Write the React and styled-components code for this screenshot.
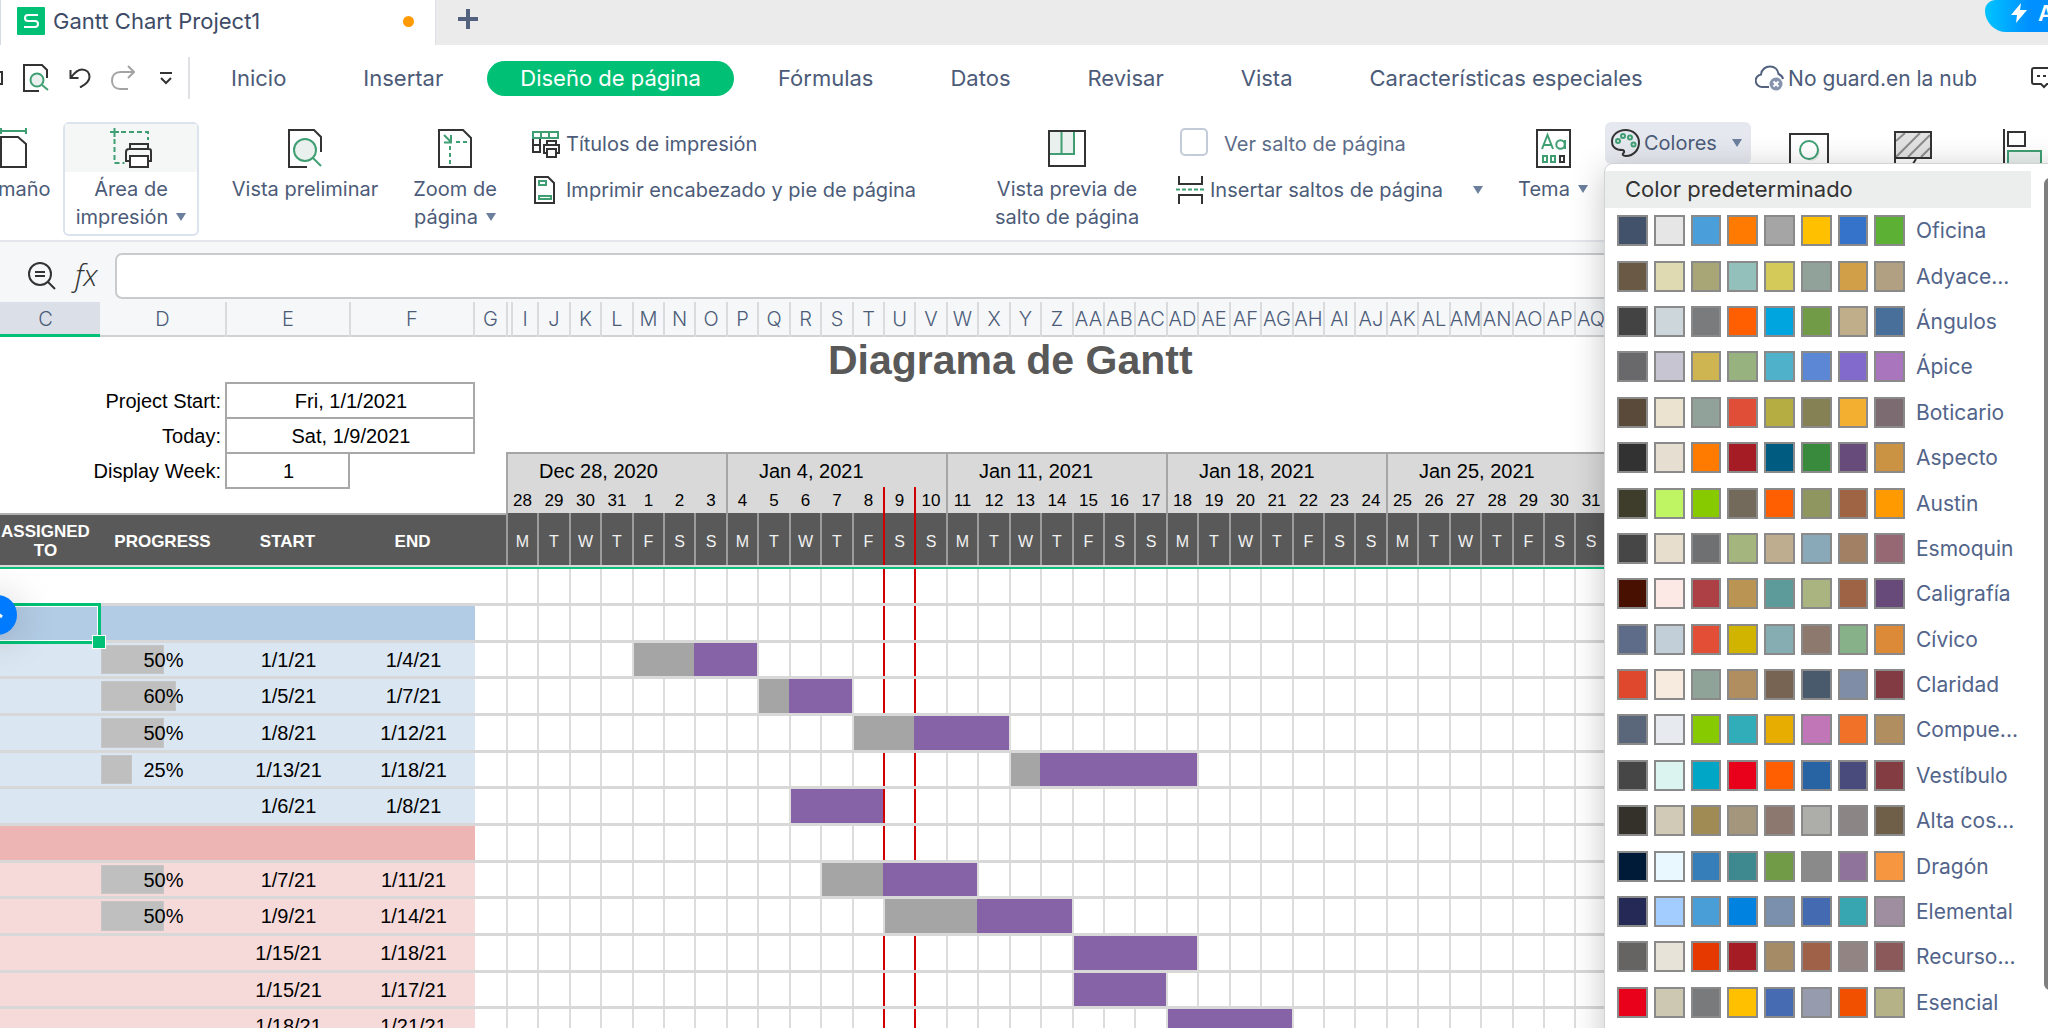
import { Fragment } from 'react'
import styled, { createGlobalStyle, css } from 'styled-components'

const GlobalStyle = createGlobalStyle`
   * {
      box-sizing: border-box;
   }
   body {
      margin: 0;
      overflow: hidden;
      background: #fff;
      font-family: Inter, "Open Sans", sans-serif;
      color: #4c5b78;
   }
   button {
      border: 0;
      padding: 0;
      background: none;
      color: inherit;
      font: inherit;
   }
   svg {
      flex: none;
   }
`

const INK = '#333'
const GREEN = '#3f9f73'
const LINE = '#d8d8d8'

const Page = styled.div`
   height: 100vh;
   overflow: hidden;
   display: flex;
   flex-direction: column;
`

/* ---------- title bar ---------- */

const TitleBar = styled.header`
   display: flex;
   flex: none;
   height: 45px;
   background: #ebebeb;
`

const FileTab = styled.div`
   display: flex;
   align-items: center;
   width: 436px;
   padding: 0 21px 3px 16px;
   border-left: 1px solid #d5dbe5;
   border-right: 1px solid #dcdfe5;
   background: #fff;
   color: #3d4b66;
   font-size: 22px;
`

const FileName = styled.span`
   margin-left: 8px;
   flex: 1;
`

const UnsavedDot = styled.span`
   width: 11px;
   height: 11px;
   border-radius: 50%;
   background: #ff9a00;
`

const NewTab = styled.button`
   display: flex;
   align-items: center;
   justify-content: center;
   width: 64px;
   height: 38px;
`

const UpgradeButton = styled.button`
   display: flex;
   align-items: center;
   gap: 10px;
   width: 63px;
   height: 32px;
   margin-left: auto;
   padding: 0 0 6px 25px;
   border-radius: 12px 0 0 24px;
   background: linear-gradient(90deg, #00c4ff, #0090ff 70%);
   color: #fff;
   font-size: 22px;
   font-weight: 600;
   white-space: nowrap;
   overflow: hidden;
`

/* ---------- menu bar ---------- */

const MenuBar = styled.div`
   display: flex;
   flex: none;
   align-items: center;
   height: 66px;
   overflow: hidden;
`

const QuickTools = styled.div`
   display: flex;
   align-items: center;
   gap: 20px;
   width: 213px;
   height: 42px;
   margin-left: -23px;
   flex: none;
   border-right: 2px solid #dfe1e4;

   button {
      display: flex;
      justify-content: center;
      min-width: 22px;
   }
`

const Tabs = styled.nav`
   display: flex;
   gap: 11px;
   margin-left: 8px;
   flex: none;
`

const Tab = styled.button`
   height: 35px;
   padding: 0 33px;
   border-radius: 18px;
   font-size: 22px;
   line-height: 34px;
   white-space: nowrap;
   ${({ $active }) => $active && css`
      background: #00c076;
      color: #fff;
   `}
`

const CloudStatus = styled.button`
   display: flex;
   align-items: center;
   gap: 3px;
   margin-left: auto;
   margin-right: 54px;
   font-size: 21px;
   white-space: nowrap;
`

const Comments = styled.button`
   display: flex;
   margin-right: -11px;
`

/* ---------- ribbon ---------- */

const Ribbon = styled.div`
   position: relative;
   z-index: 5;
   display: flex;
   flex: none;
   align-items: flex-start;
   gap: 12px;
   height: 131px;
   padding-top: 11px;
   margin-left: -25px;
   border-bottom: 2px solid #e3e7ed;
`

const Tool = styled.button`
   flex: none;
   width: ${({ $w }) => $w}px;
   height: 114px;
   display: flex;
   flex-direction: column;
   align-items: center;
   font-size: 20px;
   line-height: 28px;
   white-space: nowrap;
   ${({ $boxed }) => $boxed && css`
      border-radius: 6px;
      box-shadow: inset 0 0 0 2px #dbe3ee;
   `}
`

const ToolIcon = styled.span`
   display: flex;
   align-items: center;
   justify-content: center;
   align-self: stretch;
   height: 48px;
   margin: 2px 2px 3px;
   background: ${({ $shade }) => ($shade ? '#f5f6f6' : 'none')};
`

const Caret = styled.i`
   display: inline-block;
   flex: none;
   margin-left: 8px;
   vertical-align: 3px;
   border: 5px solid transparent;
   border-top: 8px solid #6b7f9c;
   border-bottom: 0;
`

const Stack = styled.div`
   flex: none;
   width: ${({ $w }) => $w}px;
   padding-left: ${({ $pad }) => $pad}px;
   display: flex;
   flex-direction: column;
   gap: 2px;
`

const StackItem = styled.button`
   display: flex;
   align-items: center;
   height: 44px;
   font-size: 20px;
   white-space: nowrap;

   svg {
      width: 28px;
      margin-right: 6px;
   }
   ${Caret} {
      margin-left: 30px;
   }
`

const CheckRow = styled.label`
   display: flex;
   align-items: center;
   height: 44px;
   padding-left: 4px;
   gap: 16px;
   color: #5c6c88;
   font-size: 20px;
   white-space: nowrap;
`

const Check = styled.input`
   appearance: none;
   width: 28px;
   height: 28px;
   margin: 0 0 4px;
   border: 2px solid #c3cbd9;
   border-radius: 5px;
   background: #fff;
`

const ColorsWrap = styled.div`
   position: relative;
   flex: none;
   width: 146px;
`

const ColorsButton = styled.button`
   display: flex;
   align-items: center;
   width: 100%;
   height: 42px;
   padding: 0 9px 0 6px;
   gap: 4px;
   border-radius: 6px;
   background: #e5e9ef;
   font-size: 20px;

   ${Caret} {
      margin-left: auto;
   }
`

/* ---------- colour menu ---------- */

const ColorMenu = styled.div`
   position: absolute;
   z-index: 10;
   top: 42px;
   left: 0;
   width: 460px;
   height: 900px;
   padding-top: 7px;
   border-radius: 8px 0 0 0;
   background: #fff;
   box-shadow: 0 0 0 1px #d0d2d4, 0 6px 34px rgba(0, 0, 0, 0.24);
`

const MenuTitle = styled.div`
   width: 426px;
   height: 37px;
   padding-left: 20px;
   background: #eceeed;
   color: #333;
   font-size: 22px;
   line-height: 36px;
`

const ThemeList = styled.div`
   display: grid;
   grid-template-rows: repeat(18, 1fr);
   height: 817px;
`

const ThemeRow = styled.button`
   display: flex;
   align-items: center;
   gap: 11px;
   padding-left: 12px;
   color: #52648a;
   font-size: 21px;
   text-align: left;
   white-space: nowrap;
`

const Swatches = styled.span`
   display: grid;
   grid-template-columns: repeat(8, 1fr);
   gap: 6px;
   width: 288px;
`

const Swatch = styled.span`
   height: 31px;
   border: 2px solid #8a8a8a;
   background: ${({ $color }) => $color};
`

const ScrollThumb = styled.div`
   position: absolute;
   top: 14px;
   left: 439px;
   width: 12px;
   height: 812px;
   border-radius: 6px;
   background: #7f7f7f;
`

/* ---------- formula bar and column letters ---------- */

const FormulaBar = styled.div`
   display: flex;
   flex: none;
   align-items: center;
   height: 60px;
   padding: 8px 0 1px 28px;
   background: #f5f7f9;
`

const Fx = styled.span`
   width: 40px;
   margin: 0 0 2px 19px;
   color: #333;
   font: italic 300 30px "Open Sans", sans-serif;
   line-height: 40px;
`

const FormulaInput = styled.input`
   flex: 1;
   height: 46px;
   border: 2px solid #c9cbcc;
   border-radius: 7px;
   background: #fff;
   font-size: 20px;
`

const Letters = styled.div`
   display: flex;
   flex: none;
   height: 35px;
   margin-left: -9px;
   border-bottom: 2px solid #cfd1d3;
   background: #f5f7f9;
   font-size: 20px;
   font-weight: 300;
   line-height: 35px;
`

const Letter = styled.span`
   flex: none;
   width: ${({ $w }) => $w}px;
   height: 35px;
   display: flex;
   justify-content: center;
   border-right: 2px solid #d9dbdd;
   ${({ $selected }) => $selected && css`
      background: #dbe0e8;
      border-bottom: 3px solid #00c076;
      border-right: 0;
   `}
`

/* ---------- sheet ---------- */

const SheetArea = styled.main`
   position: relative;
   flex: 1;
   overflow: hidden;
   background: #fff;
`

const Sheet = styled.table`
   width: 1615px;
   margin-left: -9px;
   border-collapse: separate;
   border-spacing: 0;
   table-layout: fixed;
   color: #000;
   font-family: "Liberation Sans", Arial, sans-serif;
   font-size: 20px;
   line-height: 24px;

   td, th {
      padding: 0;
      font-weight: 400;
      text-align: center;
   }
`

const TopRow = styled.tr`
   height: ${({ $h }) => $h}px;
`

const SheetTitle = styled.td`
   && {
      padding: 1px 0 0 322px;
      text-align: left;
      color: #595959;
      font-size: 41px;
      font-weight: 700;
      line-height: 44px;
   }
`

const InfoLabel = styled.th`
   && {
      padding: 2px 4px 0 0;
      text-align: right;
   }
`

const InfoValue = styled.td`
   && {
      padding: 1px 0 0 2px;
      border: 2px solid #a8a8a8;
      border-bottom: 0;
   }
`

const InfoEdge = styled.td`
   border-top: 2px solid #a8a8a8;
`

const Week = styled.th`
   && {
      padding-left: 31px;
      text-align: left;
      border-top: 2px solid #a6a6a6;
      border-left: 2px solid #a6a6a6;
      background: #d9d9d9;
   }
`

const DayNumber = styled.td`
   && {
      padding-top: 2px;
      font-size: 17px;
      line-height: 20px;
      background: #d9d9d9;
      border-left: 2px solid ${({ $monday, $red }) => ($red ? '#d10000' : $monday ? '#a6a6a6' : '#d9d9d9')};
   }
`

const Heading = styled.th`
   && {
      height: 56px;
      border-top: 2px solid #b0b0b0;
      border-bottom: 2px solid #0fbf7c;
      box-shadow: inset 0 -2px 0 #d9d9d9;
      background: #595959;
      color: #fff;
      font-size: 17px;
      font-weight: 700;
      line-height: 19px;
   }
`

const DayLetter = styled.th`
   && {
      padding: 3px 0 0 2px;
      border-bottom: 2px solid #0fbf7c;
      box-shadow: inset 0 -2px 0 #d9d9d9;
      background: linear-gradient(90deg, ${({ $red }) => ($red ? '#d10000' : '#9c9c9c')} 2px, #595959 2px);
      color: #f2f2f2;
      font-size: 16px;
   }
`

const TaskRow = styled.tr`
   height: 37px;
   &:nth-child(3n) {
      height: 36px;
   }
`

const Cell = styled.td`
   && {
      position: relative;
      padding-left: 2px;
      border-bottom: 3px solid ${LINE};
      background: ${({ $bg }) => $bg || '#fff'};
   }
`

const DayCell = styled.td`
   border-bottom: 3px solid ${LINE};
   background: linear-gradient(90deg, ${({ $edge }) => $edge || '#dcdcdc'} 2px, ${({ $fill }) => $fill || '#fff'} 2px);
   background-clip: padding-box;
`

const Progress = styled.div`
   position: absolute;
   top: 2px;
   bottom: 2px;
   left: 1px;
   border: 1px solid #c6c6c6;
   background: #bfbfbf;
`

const Amount = styled.span`
   position: relative;
`

const Selection = styled.div`
   position: absolute;
   z-index: 1;
   top: -3px;
   right: -1px;
   bottom: -4px;
   left: 0;
   border: 3px solid #00c076;
   box-shadow: inset 0 0 0 1px #fff;

   &::after {
      content: "";
      position: absolute;
      right: -8px;
      bottom: -8px;
      width: 12px;
      height: 12px;
      border: 1px solid #fff;
      background: #00c076;
   }
`

const Floater = styled.button`
   position: absolute;
   z-index: 2;
   top: 258px;
   left: -23px;
   display: flex;
   align-items: center;
   justify-content: flex-end;
   width: 40px;
   height: 40px;
   padding-right: 14px;
   border-radius: 50%;
   background: #007bff;
   box-shadow: 0 2px 40px rgba(0, 0, 0, 0.22);
`

/* ---------- data ---------- */

const menuTabs = ['Inicio', 'Insertar', 'Diseño de página', 'Fórmulas', 'Datos', 'Revisar', 'Vista', 'Características especiales']

const themes = [
   ['Oficina', '#43526b #e6e6e6 #4a9fdb #ff7a00 #a5a5a5 #ffc000 #3573cb #5cb034'],
   ['Adyace...', '#6a5a45 #e0dab3 #a8a576 #94c0bb #d4ca59 #90a29a #d19f48 #b2a083'],
   ['Ángulos', '#434343 #cdd6da #7a7b7d #ff5f00 #00a5e0 #729b47 #c0ae8a #486f99'],
   ['Ápice', '#69696b #c8c5d2 #ceb552 #97b17f #4fb2ca #5b87d5 #8269cc #a976be'],
   ['Boticario', '#5a4a3a #ebe3d0 #90a299 #e04e37 #b6ad42 #858155 #f3b030 #7c6b71'],
   ['Aspecto', '#323232 #e6dfd1 #ff7b00 #a61c24 #005b80 #3a8a3d #674b7a #c99343'],
   ['Austin', '#3e3d2c #bff562 #88ca00 #746a5c #ff5f00 #90965f #9e6444 #ff9b00'],
   ['Esmoquin', '#464646 #e8dece #6f7072 #a4b57e #bfad8f #89a9b8 #a28063 #956873'],
   ['Caligrafía', '#471000 #fce8e4 #ad4044 #ba9453 #5d9a9a #aab480 #9d6344 #674a7a'],
   ['Cívico', '#5f6c89 #c2cfd9 #e34f36 #d1b400 #86adb2 #8d796d #86b189 #dd8a38'],
   ['Claridad', '#e0482d #f7ebdf #90a398 #b18e60 #786453 #4a5a6d #7f8da6 #823b43'],
   ['Compue...', '#5a6679 #e7eaee #88ca00 #31adb9 #e7ad00 #c176b7 #f27128 #b08e5f'],
   ['Vestíbulo', '#464646 #dbf4f0 #00a6c5 #e9001b #ff5f00 #2863a3 #484b7c #843c43'],
   ['Alta cos...', '#33312a #d1cab6 #a08b54 #a4967d #8c786e #adaea9 #8b8586 #6f5f49'],
   ['Dragón', '#001b38 #e9f7ff #357eb9 #3e888f #729b47 #8a8a8a #90739b #f69641'],
   ['Elemental', '#252955 #a3ccff #4a9ed8 #0083e0 #7b90ad #446bb1 #37a6b1 #9f8da0'],
   ['Recurso...', '#666462 #e8e3d8 #e53900 #a61c24 #a68c66 #9f6148 #928483 #8c595b'],
   ['Esencial', '#e9001b #cdc8b1 #797a7b #ffc000 #476bb3 #969bae #f15000 #b6b287'],
]

const DAY_WIDTHS = [31, 32, 31, 32, 31, 31, 32]
const weeks = ['Dec 28, 2020', 'Jan 4, 2021', 'Jan 11, 2021', 'Jan 18, 2021', 'Jan 25, 2021']
const dayLetters = ['M', 'T', 'W', 'T', 'F', 'S', 'S']
const days = Array.from({ length: 35 }, (_, i) => ({
   number: i < 4 ? 28 + i : i - 3,
   letter: dayLetters[i % 7],
   width: DAY_WIDTHS[i % 7],
   monday: i % 7 === 0,
   red: i === 12 || i === 13, // both sides of today
}))

const BLUE_HEAD = '#b3cce5'
const BLUE = '#dae6f1'
const RED_HEAD = '#eeb5b5'
const RED = '#f6dada'

// bar: [first day, days done, end day (exclusive)]
const tasks = [
   {},
   { bg: BLUE_HEAD, selected: true },
   { bg: BLUE, progress: 50, start: '1/1/21', end: '1/4/21', bar: [4, 2, 8] },
   { bg: BLUE, progress: 60, start: '1/5/21', end: '1/7/21', bar: [8, 1, 11] },
   { bg: BLUE, progress: 50, start: '1/8/21', end: '1/12/21', bar: [11, 2, 16] },
   { bg: BLUE, progress: 25, start: '1/13/21', end: '1/18/21', bar: [16, 1, 22] },
   { bg: BLUE, start: '1/6/21', end: '1/8/21', bar: [9, 0, 12] },
   { bg: RED_HEAD },
   { bg: RED, progress: 50, start: '1/7/21', end: '1/11/21', bar: [10, 2, 15] },
   { bg: RED, progress: 50, start: '1/9/21', end: '1/14/21', bar: [12, 3, 18] },
   { bg: RED, start: '1/15/21', end: '1/18/21', bar: [18, 0, 22] },
   { bg: RED, start: '1/15/21', end: '1/17/21', bar: [18, 0, 21] },
   { bg: RED, start: '1/18/21', end: '1/21/21', bar: [21, 0, 25] },
]

const columnName = (n) => (n < 26 ? String.fromCharCode(65 + n) : 'A' + String.fromCharCode(39 + n))

/* ---------- icons ---------- */

const Icon = ({ w, h = w, sw = 2, stroke = INK, children }) => (
   <svg width={w} height={h} viewBox={`0 0 ${w} ${h}`} fill="none" stroke={stroke} strokeWidth={sw} aria-hidden="true">
      {children}
   </svg>
)

const LogoIcon = () => (
   <Icon w={28} stroke="#fff">
      <rect width="28" height="28" rx="1" fill="#00c076" stroke="none" />
      <path d="M21 8H11a3 3 0 0 0-3 3 3 3 0 0 0 3 3h7a3 3 0 0 1 3 3 3 3 0 0 1-3 3H7" />
   </Icon>
)

const PreviewSmallIcon = () => (
   <Icon w={26} h={28}>
      <path d="M16 27H1V1h18l5 5v8" />
      <circle cx="14" cy="16" r="6.500" stroke={GREEN} fill="#e9f0ed" />
      <path d="M19 21l6 5" stroke={GREEN} />
   </Icon>
)

const UndoIcon = () => (
   <Icon w={22} h={20}>
      <path d="M1.500 2v8h8M2 9.500C6 4 9 1.500 13 1.500c5 0 7.500 3.500 7.500 7.500 0 4-3 7-9.500 10.500" />
   </Icon>
)

const RedoIcon = () => (
   <Icon w={24} h={26} stroke="#a3a3a3">
      <path d="M17 1l6 6-6 6M23 7H9.500C4 7 1 10.500 1 15.500S4 24 9 24h8" />
   </Icon>
)

const MoreIcon = () => (
   <Icon w={14} h={14}>
      <path d="M1 2h12M2 7l5 5 5-5" />
   </Icon>
)

const CloudIcon = () => (
   <Icon w={30} h={26} stroke="#51617e">
      <path d="M14 22H7.500A6.300 6.300 0 0 1 6 9.500C6.500 4.500 10.500 1.500 15 1.500c4.500 0 8 3 8.500 7.500 2.500 1 4 2.500 4.500 5" />
      <circle cx="21" cy="19" r="6.500" fill="#8593ad" stroke="none" />
      <path d="M18.500 16.500l5 5m0-5l-5 5" stroke="#fff" />
   </Icon>
)

const CommentIcon = () => (
   <Icon w={28} h={22}>
      <path d="M3 1h22a2 2 0 0 1 2 2v12a2 2 0 0 1-2 2h-9l-3 3-3-3H3a2 2 0 0 1-2-2V3a2 2 0 0 1 2-2z" />
      <path d="M6 9h3m3 0h3m3 0h3" />
   </Icon>
)

const SizeIcon = () => (
   <Icon w={27} h={40}>
      <path d="M1 3h25M1 0v6M26 0v6" stroke={GREEN} />
      <path d="M1 9h17l8 7v23H1z" />
   </Icon>
)

const PrintAreaIcon = () => (
   <Icon w={42} h={40}>
      <path d="M0 4h9M4.500 0v9" stroke={GREEN} />
      <path d="M11 4h27v8M4.500 11v24h10" stroke={GREEN} strokeDasharray="5 3" />
      <path d="M20 21v-5h18v5M20 33h-4V24a3 3 0 0 1 3-3h20a2 2 0 0 1 2 2v10h-3" />
      <path d="M20 28h18v11H20z" fill="#fff" />
   </Icon>
)

const PreviewIcon = () => (
   <Icon w={34} h={40}>
      <path d="M19 39H1V2h25l7 7v15" />
      <circle cx="17" cy="22" r="11" stroke={GREEN} fill="#e9f0ed" />
      <path d="M25 30l8 8" stroke={GREEN} />
   </Icon>
)

const ZoomPageIcon = () => (
   <Icon w={34} h={40}>
      <path d="M1 2h24l8 8v29H1z" />
      <path d="M6 7l7 7M13 7v7.500H6" stroke={GREEN} />
      <path d="M18 14h14M12 18v20" stroke={GREEN} strokeDasharray="4 3" />
   </Icon>
)

const TitlesIcon = () => (
   <Icon w={28} h={27}>
      <path d="M1 1h25v6H1zM9 1v6M17 1v6" stroke={GREEN} />
      <path d="M1 8v13h7V8M1 14h7M15 14v-4h9v4M15 22h-3v-8h15v8h-3" />
      <path d="M15 18h9v8h-9z" fill="#fff" />
   </Icon>
)

const HeaderFooterIcon = () => (
   <Icon w={28} h={28}>
      <path d="M3 1h13l6 6v20H3z" />
      <path d="M7 5h7v4H7zM7 20h12v3H7z" stroke={GREEN} />
   </Icon>
)

const BreakPreviewIcon = () => (
   <Icon w={38} h={38}>
      <path d="M1 3h25v22H1z" stroke="none" fill="#e9f0ed" />
      <path d="M2 25h24V3M13.500 3v22" stroke={GREEN} />
      <path d="M1 2h36v35H1z" />
   </Icon>
)

const InsertBreakIcon = () => (
   <Icon w={28} h={28}>
      <path d="M3 0v8h23V0M3 28v-9h23v9" />
      <path d="M0 13.500h28" stroke={GREEN} strokeDasharray="4 2" />
   </Icon>
)

const ThemeIcon = () => (
   <Icon w={35} h={40}>
      <path d="M1 2h33v37H1z" />
      <path d="M6 21l5.500-14L17 21M8 17h7" stroke={GREEN} />
      <path d="M29 12v9" stroke={GREEN} />
      <circle cx="24.500" cy="16.500" r="4.200" stroke={GREEN} />
      <path d="M7 28h4v6H7zM15 28h4v6h-4z" stroke={GREEN} />
      <path d="M24 28h4v6h-4z" />
   </Icon>
)

const PaletteIcon = () => (
   <Icon w={29} h={28}>
      <path d="M7 20.500C3.500 19.500 1 16.500 1 12.500 1 6 7 1 14.500 1S28 6 28 13.500C28 21 22.500 27 15 27c-3.500 0-4-1.500-2.500-3 1.500-1.500.500-3-1.500-3-1.500 0-2.500-.200-4-.500z" />
      <g stroke={GREEN}>
         <circle cx="7" cy="12" r="2" />
         <circle cx="12" cy="7" r="2" />
         <circle cx="19" cy="8.500" r="2" />
         <circle cx="22.500" cy="15.500" r="2" />
      </g>
   </Icon>
)

const BackgroundIcon = () => (
   <Icon w={40} h={42}>
      <path d="M1 7h38v34H1z" />
      <circle cx="22" cy="25" r="9" fill="#ececec" stroke="none" />
      <circle cx="20" cy="23" r="9" stroke={GREEN} fill="#fff" />
   </Icon>
)

const PatternIcon = () => (
   <Icon w={38} h={42}>
      <g transform="translate(0 4)">
         <path d="M1 1h36v26H1z" fill="#e2e2e2" />
         <path d="M2 10L11 2M2 26L26 2M14 26L36 4M27 26l9-9" stroke="#8c8c8c" />
         <path d="M1 1v37M22 28l-5 8" />
         <path d="M1 1h36v26H1z" />
      </g>
   </Icon>
)

const AlignIcon = () => (
   <Icon w={40} h={40}>
      <path d="M1 1v39M5 4h17v14H5z" />
      <path d="M5 23h33v16H5z" stroke={GREEN} fill="#e9f0ed" />
   </Icon>
)

const SearchCellIcon = () => (
   <Icon w={28} h={28}>
      <circle cx="12" cy="12" r="11" />
      <path d="M20 20l7 7M7 10h10M7 14h10" />
   </Icon>
)

/* ---------- parts ---------- */

const ColorPicker = () => (
   <ColorMenu>
      <MenuTitle>Color predeterminado</MenuTitle>
      <ThemeList>
         {themes.map(([name, colors]) => (
            <ThemeRow key={name}>
               <Swatches>
                  {colors.split(' ').map((c, i) => <Swatch key={i} $color={c} />)}
               </Swatches>
               {name}
            </ThemeRow>
         ))}
      </ThemeList>
      <ScrollThumb />
   </ColorMenu>
)

const ColumnLetters = () => (
   <Letters>
      <Letter $w={109} $selected>C</Letter>
      <Letter $w={127}>D</Letter>
      <Letter $w={124}>E</Letter>
      <Letter $w={124}>F</Letter>
      <Letter $w={33}>G</Letter>
      <Letter $w={5} />
      {days.map((d, i) => (
         <Letter key={i} $w={i === 0 ? d.width - 5 : d.width}>{columnName(i + 8)}</Letter>
      ))}
   </Letters>
)

const DayCells = ({ bar }) => days.map((d, i) => {
   const inBar = bar && i >= bar[0] && i < bar[2]
   const fill = inBar ? (i < bar[0] + bar[1] ? '#a5a5a5' : '#8662a6') : undefined
   let edge = d.red ? '#d10000' : undefined
   if (inBar) edge = i > bar[0] ? fill : undefined
   return <DayCell key={i} $fill={fill} $edge={edge} />
})

const GanttSheet = () => (
   <Sheet>
      <colgroup>
         <col style={{ width: 109 }} />
         <col style={{ width: 125 }} />
         <col style={{ width: 125 }} />
         <col style={{ width: 125 }} />
         <col style={{ width: 31 }} />
         {days.map((d, i) => <col key={i} style={{ width: d.width }} />)}
      </colgroup>
      <thead>
         <TopRow $h={45}>
            <td colSpan={5} />
            <SheetTitle colSpan={35}>Diagrama de Gantt</SheetTitle>
         </TopRow>
         <TopRow $h={35}>
            <InfoLabel colSpan={2}>Project Start:</InfoLabel>
            <InfoValue colSpan={2}>Fri, 1/1/2021</InfoValue>
         </TopRow>
         <TopRow $h={35}>
            <InfoLabel colSpan={2}>Today:</InfoLabel>
            <InfoValue colSpan={2}>Sat, 1/9/2021</InfoValue>
         </TopRow>
         <TopRow $h={35}>
            <InfoLabel colSpan={2}>Display Week:</InfoLabel>
            <InfoValue>1</InfoValue>
            <InfoEdge />
            <td />
            {weeks.map((w) => <Week key={w} colSpan={7}>{w}</Week>)}
         </TopRow>
         <TopRow $h={26}>
            <td colSpan={2} />
            <InfoEdge />
            <td colSpan={2} />
            {days.map((d, i) => <DayNumber key={i} $monday={d.monday} $red={d.red}>{d.number}</DayNumber>)}
         </TopRow>
         <tr>
            <Heading>ASSIGNED<br />TO</Heading>
            <Heading>PROGRESS</Heading>
            <Heading>START</Heading>
            <Heading>END</Heading>
            <Heading />
            {days.map((d, i) => <DayLetter key={i} $red={d.red}>{d.letter}</DayLetter>)}
         </tr>
      </thead>
      <tbody>
         {tasks.map((t, i) => (
            <TaskRow key={i}>
               <Cell $bg={t.bg}>{t.selected && <Selection />}</Cell>
               <Cell $bg={t.bg}>
                  {t.progress && (
                     <Fragment>
                        <Progress style={{ width: `${t.progress}%` }} />
                        <Amount>{t.progress}%</Amount>
                     </Fragment>
                  )}
               </Cell>
               <Cell $bg={t.bg}>{t.start}</Cell>
               <Cell $bg={t.bg}>{t.end}</Cell>
               <Cell />
               <DayCells bar={t.bar} />
            </TaskRow>
         ))}
      </tbody>
   </Sheet>
)

const App = () => (
   <Page>
      <GlobalStyle />
      <TitleBar>
         <FileTab>
            <LogoIcon />
            <FileName>Gantt Chart Project1</FileName>
            <UnsavedDot />
         </FileTab>
         <NewTab aria-label="+">
            <Icon w={22} sw={4} stroke="#51617e"><path d="M11 1v20M1 11h20" /></Icon>
         </NewTab>
         <UpgradeButton>
            <svg width="18" height="22" viewBox="0 0 18 22" fill="#fff" aria-hidden="true">
               <path d="M11 1L1 13h6l-1 8 11-13h-7z" />
            </svg>
            A
         </UpgradeButton>
      </TitleBar>

      <MenuBar>
         <QuickTools>
            <button aria-label="Imprimir">
               <Icon w={26} h={20}><path d="M2 15V4h23v12h-5" /></Icon>
            </button>
            <button aria-label="Vista preliminar"><PreviewSmallIcon /></button>
            <button aria-label="Deshacer"><UndoIcon /></button>
            <button aria-label="Rehacer"><RedoIcon /></button>
            <button aria-label="Más"><MoreIcon /></button>
         </QuickTools>
         <Tabs>
            {menuTabs.map((t) => <Tab key={t} $active={t === 'Diseño de página'}>{t}</Tab>)}
         </Tabs>
         <CloudStatus><CloudIcon />No guard.en la nub</CloudStatus>
         <Comments aria-label="Comentarios"><CommentIcon /></Comments>
      </MenuBar>

      <Ribbon>
         <Tool $w={76}><ToolIcon><SizeIcon /></ToolIcon>Tamaño</Tool>
         <Tool $w={136} $boxed>
            <ToolIcon $shade><PrintAreaIcon /></ToolIcon>
            <span>Área de<br />impresión<Caret /></span>
         </Tool>
         <Tool $w={188}><ToolIcon><PreviewIcon /></ToolIcon>Vista preliminar</Tool>
         <Tool $w={88}>
            <ToolIcon><ZoomPageIcon /></ToolIcon>
            <span>Zoom de<br />página<Caret /></span>
         </Tool>
         <Stack $w={460} $pad={21}>
            <StackItem><TitlesIcon />Títulos de impresión</StackItem>
            <StackItem><HeaderFooterIcon />Imprimir encabezado y pie de página</StackItem>
         </Stack>
         <Tool $w={168}>
            <ToolIcon><BreakPreviewIcon /></ToolIcon>
            <span>Vista previa de<br />salto de página</span>
         </Tool>
         <Stack $w={338} $pad={13}>
            <CheckRow><Check type="checkbox" />Ver salto de página</CheckRow>
            <StackItem><InsertBreakIcon />Insertar saltos de página<Caret /></StackItem>
         </Stack>
         <Tool $w={80}>
            <ToolIcon><ThemeIcon /></ToolIcon>
            <span>Tema<Caret /></span>
         </Tool>
         <ColorsWrap>
            <ColorsButton><PaletteIcon />Colores<Caret /></ColorsButton>
            <ColorPicker />
         </ColorsWrap>
         <Tool $w={92} aria-label="Fondo"><ToolIcon><BackgroundIcon /></ToolIcon></Tool>
         <Tool $w={92} aria-label="Trama"><ToolIcon><PatternIcon /></ToolIcon></Tool>
         <Tool $w={104} aria-label="Alinear"><ToolIcon><AlignIcon /></ToolIcon></Tool>
      </Ribbon>

      <FormulaBar>
         <SearchCellIcon />
         <Fx>fx</Fx>
         <FormulaInput aria-label="Fórmula" />
      </FormulaBar>

      <ColumnLetters />
      <SheetArea>
         <GanttSheet />
         <Floater aria-label="Asistente">
            <Icon w={12} h={12} stroke="#fff" sw={3}><path d="M1 9l5-5 5 4" /></Icon>
         </Floater>
      </SheetArea>
   </Page>
)

export default App
